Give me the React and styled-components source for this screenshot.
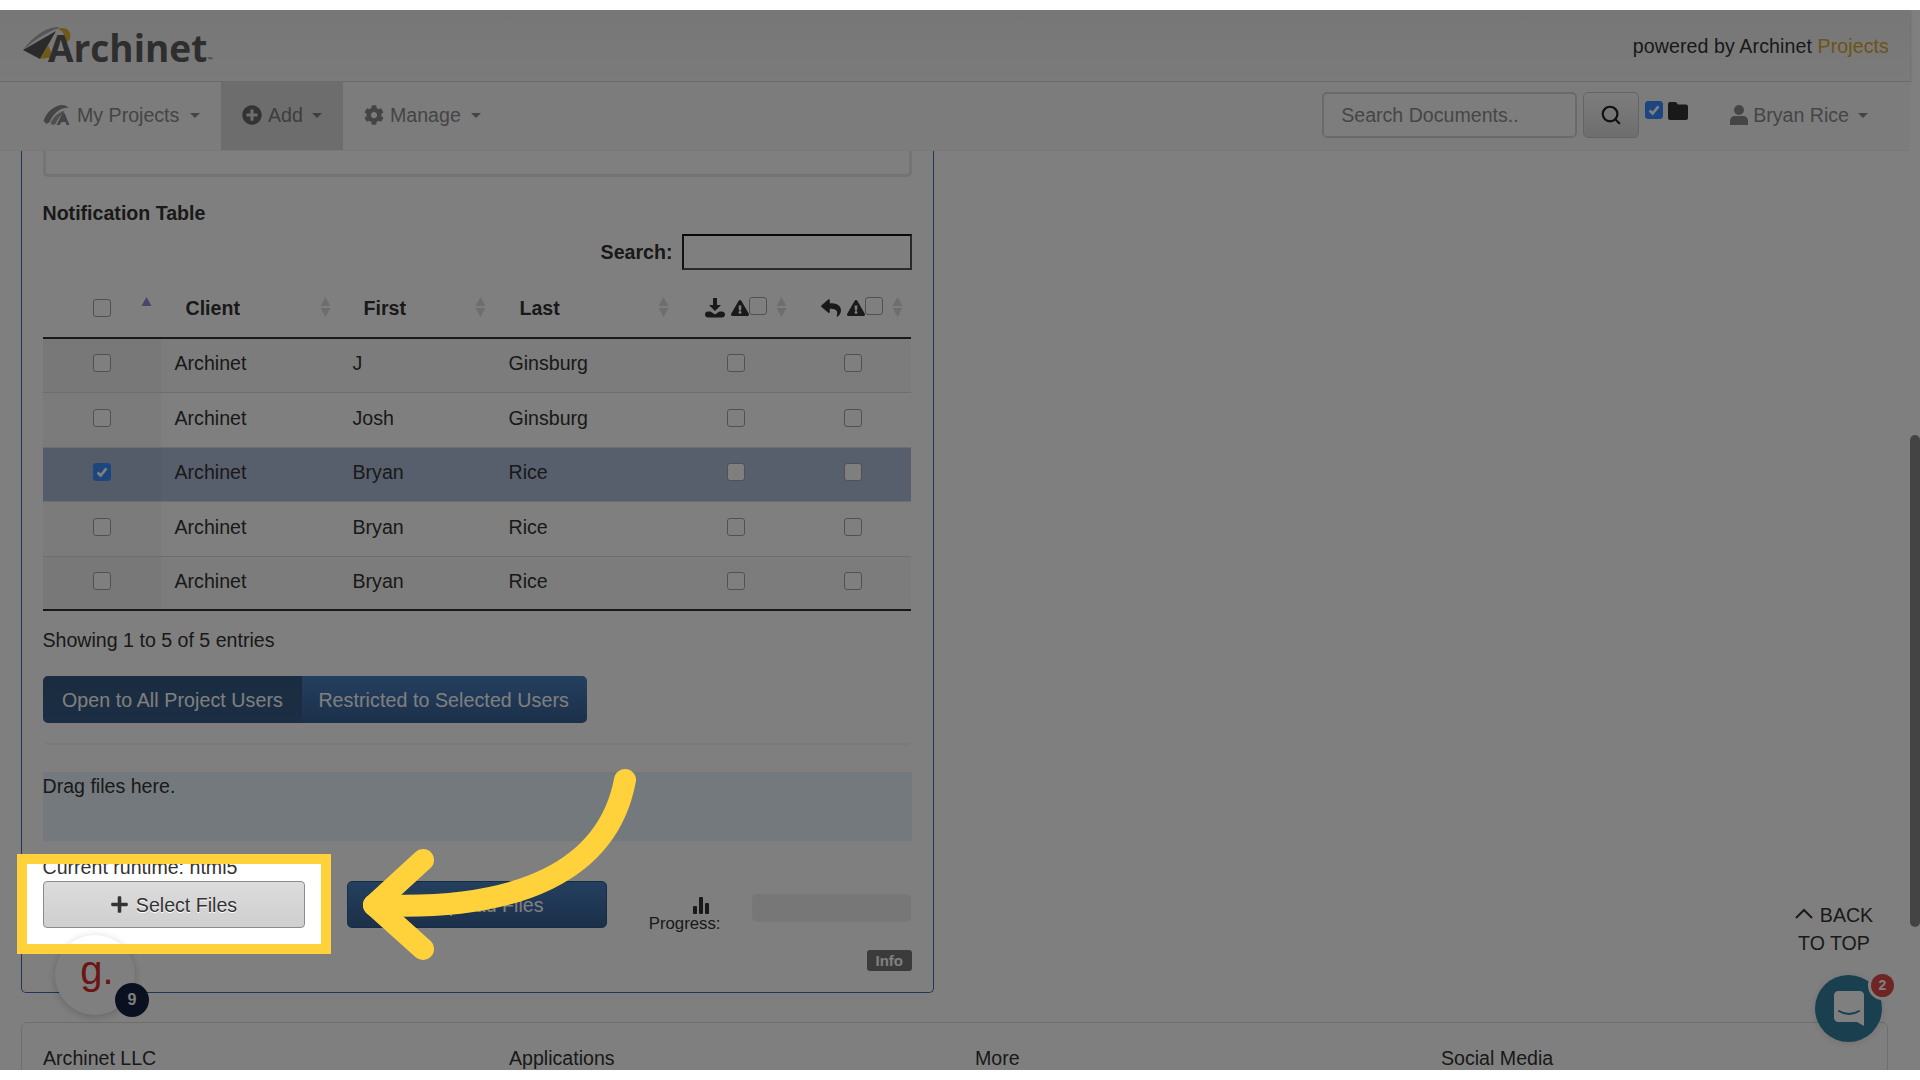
import React from "react";
import styled, { createGlobalStyle } from "styled-components";
import { FaCog, FaExclamationTriangle, FaPlus, FaPlusCircle, FaReply, FaUpload } from "react-icons/fa";
import { Search } from "lucide-react";

const GlobalStyle = createGlobalStyle`
  html, body {
    margin: 0;
    background: #fff;
    overflow: hidden;
  }
  body {
    font-family: "Liberation Sans", Arial, sans-serif;
    font-size: 19.6px;
    line-height: 28px;
    color: #333;
  }
  * { box-sizing: border-box; }
`;

const rows = [
  { first: "J", last: "Ginsburg", striped: true },
  { first: "Josh", last: "Ginsburg" },
  { first: "Bryan", last: "Rice", selected: true },
  { first: "Bryan", last: "Rice" },
  { first: "Bryan", last: "Rice", striped: true },
];

const colWidths = [118, 178, 156, 184, 114, 118];

const Frame = styled.div`
  position: relative;
  display: flex;
  margin-top: 10px;
  height: 1060px;
  overflow: hidden;
`;

const Page = styled.div`
  flex: 1;
  min-width: 0;
`;

const ScrollTrack = styled.div`
  width: 10px;
  padding-top: 425px;
`;

const ScrollThumb = styled.div`
  height: 492px;
  border-radius: 5px;
  background: #888;
`;

const Header = styled.header`
  display: flex;
  align-items: center;
  justify-content: space-between;
  height: 72px;
  padding: 0 21px 0 48px;
  background: linear-gradient(#eeeeee, #f6f6f6);
  border-bottom: 1px solid #d4d4d4;
  box-shadow: 0 1px 3px rgba(0, 0, 0, 0.25);
`;

const Logo = styled.div`
  position: relative;
  margin-top: 16px;
  font-family: "Open Sans", sans-serif;
  font-size: 37px;
  font-weight: 700;
  line-height: 40px;
  color: #5c5c5c;
`;

const LogoMark = styled.svg`
  position: absolute;
  left: -28px;
  top: -5px;
  width: 60px;
  height: 40px;
`;

const LogoText = styled.span`
  position: relative;
`;

const Trademark = styled.span`
  font-size: 7px;
  font-weight: 400;
`;

const Powered = styled.div`
  letter-spacing: 0.09px;
`;

const Gold = styled.span`
  color: #d9a928;
`;

const Nav = styled.nav`
  display: flex;
  align-items: stretch;
  height: 69px;
  padding: 0 40px 0 22px;
  background: #f9f9f9;
  border-bottom: 1px solid #f0f0f0;
  color: #8a8a8a;
`;

const NavItem = styled.div`
  display: flex;
  align-items: center;
  gap: 6px;
  width: ${(p) => p.$width}px;
  padding: 0 21px 2px;
  color: ${(p) => (p.$active ? "#7c7c7c" : "#8a8a8a")};
  background: ${(p) => (p.$active ? "#dadada" : "transparent")};
  svg {
    flex: none;
    color: ${(p) => (p.$active ? "#666" : "#8a8a8a")};
  }
`;

const Caret = styled.span`
  width: 0;
  height: 0;
  margin-left: auto;
  border-top: 5px solid currentColor;
  border-left: 5px solid transparent;
  border-right: 5px solid transparent;
`;

const NavRight = styled.div`
  display: flex;
  align-items: center;
  margin-left: auto;
  padding-bottom: 2px;
`;

const DocSearch = styled.input`
  width: 255px;
  height: 46px;
  padding: 0 17px;
  font: inherit;
  background: #fbfbfb;
  border: 2px solid #d4d4d4;
  border-radius: 5px;
  &::placeholder { color: #8c8c8c; opacity: 1; }
`;

const SearchButton = styled.button`
  display: flex;
  align-items: center;
  justify-content: center;
  width: 56px;
  height: 46px;
  margin-left: 6px;
  padding: 0;
  color: #222;
  background: linear-gradient(#fafafa, #dcdcdc);
  border: 1px solid #c8c8c8;
  border-radius: 5px;
`;

const Check = styled.input.attrs({ type: "checkbox" })`
  appearance: none;
  display: block;
  width: 18px;
  height: 18px;
  margin: 0;
  background: #fff;
  border: 1.5px solid #a2a2a2;
  border-radius: 3px;
  &:checked {
    border-color: #3b8cff;
    background: #3b8cff url("data:image/svg+xml,%3Csvg xmlns='http://www.w3.org/2000/svg' viewBox='0 0 18 18'%3E%3Cpath d='M4 9.500l3.500 3.500L14 5' fill='none' stroke='white' stroke-width='3'/%3E%3C/svg%3E") center / contain no-repeat;
  }
`;

const NavCheck = styled(Check)`
  margin: -10px 0 0 6px;
`;

const FolderIcon = styled.svg`
  width: 20px;
  height: 18px;
  margin: -8px 0 0 5px;
  color: #333;
`;

const UserMenu = styled.div`
  display: flex;
  align-items: center;
  gap: 5px;
  margin-left: 42px;
`;

const UserCaret = styled(Caret)`
  margin: 0 2px 0 4px;
`;

const Content = styled.main`
  padding-left: 21px;
`;

const Panel = styled.section`
  width: 913px;
  padding: 0 21.5px 21px 20.5px;
  background: #fff;
  border: 1px solid #3e6ea8;
  border-top: 0;
  border-radius: 0 0 5px 5px;
`;

const WellStub = styled.div`
  height: 26px;
  border: 3px solid #e8e8e8;
  border-top: 0;
  border-radius: 0 0 5px 5px;
  background: #fff;
`;

const Heading = styled.h4`
  margin: 22px 0 0;
  font-size: 19.6px;
  line-height: 28px;
`;

const SearchRow = styled.label`
  display: flex;
  align-items: center;
  justify-content: flex-end;
  gap: 9px;
  margin-top: 7px;
  font-weight: 700;
`;

const TableSearch = styled.input`
  width: 230px;
  height: 36px;
  background: #fff;
  border: 2px solid #555;
  border-top-color: #111;
  border-left-color: #222;
`;

const Table = styled.table`
  width: 868px;
  margin-top: 10px;
  table-layout: fixed;
  border-collapse: collapse;
`;

const Th = styled.th`
  position: relative;
  height: 58px;
  padding: 0 0 2px ${(p) => p.$pad || 0}px;
  text-align: left;
  font-weight: 700;
  border-bottom: 2px solid #333;
`;

const HeadIcons = styled.div`
  display: flex;
  align-items: center;
  height: 22px;
  svg { flex: none; }
`;

const Warning = styled(FaExclamationTriangle)`
  margin-left: 6px;
  color: #333;
`;

const RaisedCheck = styled(Check)`
  margin: -4px 0 0 0;
`;

const Sort = styled.svg`
  position: absolute;
  top: 17px;
  right: ${(p) => p.$right || 8}px;
  width: 11px;
  height: 20px;
`;

const Tr = styled.tr`
  background: ${(p) => (p.$selected ? "#b0bed9" : p.$striped ? "#f9f9f9" : "#fff")};
  border-top: 1px solid #ddd;
  &:first-child { border-top: 0; }
  &:last-child { border-bottom: 2px solid #333; }
  &:nth-child(even) td { height: 55px; }
`;

const Td = styled.td`
  height: 54px;
  padding: 0 0 4px ${(p) => p.$pad || 0}px;
`;

const SortedTd = styled(Td)`
  background: rgba(0, 0, 0, 0.03);
`;

const CenterCheck = styled(Check)`
  margin: 0 auto;
`;

const Showing = styled.div`
  margin-top: 15px;
`;

const AccessWell = styled.div`
  height: 69px;
  margin-top: 22px;
  border-bottom: 2px solid #f4f4f4;
  border-radius: 0 0 6px 6px;
`;

const AccessGroup = styled.div`
  display: inline-flex;
  height: 47px;
  border-radius: 5px;
  overflow: hidden;
`;

const AccessButton = styled.button`
  padding: ${(p) => (p.$on ? "0 19.5px" : "0 18px 0 16px")};
  font: inherit;
  letter-spacing: 0.08px;
  color: #fff;
  border: 0;
  background: ${(p) => (p.$on ? "linear-gradient(#34597f, #375c88)" : "linear-gradient(#4880be, #376094)")};
`;

const DropZone = styled.div`
  height: 69px;
  margin-top: 27px;
  background: #e8f2fa;
`;

const Runtime = styled.div`
  height: 28px;
  margin-top: 12px;
`;

const UploadRow = styled.div`
  display: flex;
  align-items: flex-start;
  height: 47px;
`;

const FileButton = styled.button`
  display: flex;
  align-items: center;
  justify-content: center;
  gap: 7px;
  height: 47px;
  padding: 0;
  font: inherit;
  cursor: pointer;
`;

const SelectButton = styled(FileButton)`
  width: 262px;
  color: #333;
  background: linear-gradient(#dcdcdc, #cfcfcf);
  border: 1.5px solid #8c8c8c;
  border-radius: 4px;
  text-shadow: 0 1px 0 #fff;
`;

const UploadButton = styled(FileButton)`
  width: 260px;
  margin-left: 42px;
  color: #fff;
  background: linear-gradient(#4880be, #376094);
  border: 1px solid #2e5a8c;
  border-radius: 5px;
`;

const ProgressLabel = styled.div`
  display: flex;
  flex-direction: column;
  align-items: flex-end;
  width: 72px;
  margin: 15px 0 0 42px;
  line-height: 20px;
  font-size: 16.8px;
`;

const StatsIcon = styled.svg`
  width: 18px;
  height: 18px;
  margin-right: 11px;
`;

const ProgressBar = styled.div`
  width: 159px;
  height: 28px;
  margin: 13px 0 0 31px;
  background: #eeeeee;
  border-radius: 5px;
`;

const InfoRow = styled.div`
  display: flex;
  justify-content: flex-end;
  margin-top: 22px;
`;

const InfoBadge = styled.span`
  padding: 0 8.500px;
  font-size: 15px;
  font-weight: 700;
  line-height: 21px;
  color: #fff;
  background: #777;
  border-radius: 3px;
`;

const Footer = styled.footer`
  display: grid;
  grid-template-columns: repeat(4, 466px);
  width: 1867px;
  margin-top: 29px;
  padding: 21px 0 0 21px;
  background: #fff;
  border: 1px solid #ddd;
  border-radius: 6px 6px 0 0;
`;

const GradeWidget = styled.div`
  position: absolute;
  left: 55px;
  top: 925px;
  display: flex;
  align-items: center;
  justify-content: center;
  width: 80px;
  height: 80px;
  padding: 0 0 10px 4px;
  font-size: 40px;
  line-height: 40px;
  color: #d62b2b;
  background: #fff;
  border-radius: 50%;
  box-shadow: 0 2px 8px rgba(0, 0, 0, 0.2);
`;

const GradeCount = styled.span`
  position: absolute;
  left: 60px;
  top: 48px;
  width: 34px;
  height: 34px;
  font-size: 16px;
  font-weight: 700;
  line-height: 34px;
  text-align: center;
  color: #fff;
  background: #142040;
  border-radius: 50%;
`;

const BackToTop = styled.div`
  position: absolute;
  left: 1794px;
  top: 891px;
  width: 80px;
  text-align: center;
  color: #333;
`;

const Chevron = styled.svg`
  width: 18px;
  height: 11px;
  margin-right: 7px;
  vertical-align: 3px;
`;

const ChatButton = styled.div`
  position: absolute;
  left: 1815px;
  top: 965px;
  display: flex;
  align-items: center;
  justify-content: center;
  width: 67px;
  height: 67px;
  background: #347e9e;
  border-radius: 50%;
  box-shadow: 0 1px 8px rgba(0, 0, 0, 0.12);
`;

const ChatBadge = styled.span`
  position: absolute;
  left: 1871px;
  top: 964px;
  width: 23px;
  height: 23px;
  font-size: 14px;
  font-weight: 700;
  line-height: 23px;
  text-align: center;
  color: #fff;
  background: #e04a4a;
  border-radius: 50%;
  box-shadow: 0 0 0 3px #fff;
`;

const Spotlight = styled.div`
  position: absolute;
  left: 17px;
  top: 844px;
  width: 314px;
  height: 100px;
  border: 10px solid #ffd23c;
  box-shadow: 0 0 0 3000px rgba(0, 0, 0, 0.5);
`;

const CurvedArrow = styled.svg`
  position: absolute;
  left: 340px;
  top: 750px;
  width: 300px;
  height: 220px;
`;

const SortArrows = ({ right, asc }) => (
  <Sort viewBox="0 0 10 20" $right={right}>
    <path d="M5 0l5 9H0z" fill={asc ? "#8c8ce0" : "#dcdcdc"} />
    {!asc && <path d="M5 20l5-9H0z" fill="#dcdcdc" />}
  </Sort>
);

const SaveIcon = () => (
  <svg width="20" height="20" viewBox="0 0 20 20" fill="#333">
    <path d="M8 0h4v7h4l-6 6-6-6h4z" />
    <path d="M3 13.500h2.500l4.500 3 4.500-3H17c1.700 0 3 1.300 3 3s-1.300 3-3 3H3c-1.700 0-3-1.300-3-3s1.300-3 3-3z" />
  </svg>
);

const ProjectsIcon = () => (
  <svg width="28" height="21" viewBox="0 0 27 21" fill="#8a8a8a">
    <path d="M0 16C3 7 10 1 18 0c3 0 6 1 7 3-7-1-14 4-19 14l-3 2z" />
    <path d="M7 18c3-6 7-10 13-12l1 1c-4 3-7 7-9 12l-3 1z" opacity=".8" />
    <path d="M19 8l2 0 5 12h-3l-1-3h-4l-2 3h-3z" />
  </svg>
);

const App = () => (
  <>
    <GlobalStyle />
    <Frame>
      <Page>
        <Header>
          <Logo>
            <LogoMark viewBox="0 0 60 40">
              <path d="M3 27C12 15 24 5 37 4l3 1C28 8 16 16 3 27z" fill="#aaa" />
              <path d="M3 27L36 8 20 36z" fill="#555" />
              <path d="M38 6c8-3 14 2 12 10l-6 6c2-8 0-14-6-16z" fill="#e0b030" />
              <path d="M20 36l8-14 5 12z" fill="#e0b030" />
            </LogoMark>
            <LogoText>Archinet<Trademark>™</Trademark></LogoText>
          </Logo>
          <Powered>powered by Archinet <Gold>Projects</Gold></Powered>
        </Header>
        <Nav>
          <NavItem $width={199}><ProjectsIcon />My Projects<Caret /></NavItem>
          <NavItem $width={122} $active><FaPlusCircle size={20} />Add<Caret /></NavItem>
          <NavItem $width={159}><FaCog size={20} />Manage<Caret /></NavItem>
          <NavRight>
            <DocSearch placeholder="Search Documents.." />
            <SearchButton><Search size={22} strokeWidth={2.4} /></SearchButton>
            <NavCheck defaultChecked />
            <FolderIcon viewBox="0 0 20 18" fill="currentColor">
              <path d="M2 0h5c1 0 2 .8 3 2.500h8c1.100 0 2 .9 2 2V16c0 1.100-.9 2-2 2H2c-1.100 0-2-.9-2-2V2C0 .9.900 0 2 0z" />
            </FolderIcon>
            <UserMenu>
              <svg width="18" height="20" viewBox="0 0 18 20" fill="#8a8a8a">
                <circle cx="9" cy="5" r="5" />
                <path d="M5 11h8c3 0 5 2 5 5v4H0v-4c0-3 2-5 5-5z" />
              </svg>
              Bryan Rice<UserCaret />
            </UserMenu>
          </NavRight>
        </Nav>
        <Content>
          <Panel>
            <WellStub />
            <Heading>Notification Table</Heading>
            <SearchRow>Search:<TableSearch /></SearchRow>
            <Table>
              <colgroup>
                {colWidths.map((w, i) => <col key={i} width={w} />)}
              </colgroup>
              <thead>
                <tr>
                  <Th><CenterCheck /><SortArrows asc right={9} /></Th>
                  <Th $pad={25}>Client<SortArrows /></Th>
                  <Th $pad={25}>First<SortArrows right={9} /></Th>
                  <Th $pad={25}>Last<SortArrows right={10} /></Th>
                  <Th $pad={26}>
                    <HeadIcons>
                      <SaveIcon />
                      <Warning size={18} />
                      <RaisedCheck />
                    </HeadIcons>
                    <SortArrows right={6} />
                  </Th>
                  <Th $pad={28}>
                    <HeadIcons>
                      <FaReply size={20} color="#333" />
                      <Warning size={18} />
                      <RaisedCheck />
                    </HeadIcons>
                    <SortArrows />
                  </Th>
                </tr>
              </thead>
              <tbody>
                {rows.map((r, i) => (
                  <Tr key={i} $selected={r.selected} $striped={r.striped}>
                    <SortedTd><CenterCheck defaultChecked={r.selected} /></SortedTd>
                    <Td $pad={14}>Archinet</Td>
                    <Td $pad={14}>{r.first}</Td>
                    <Td $pad={14}>{r.last}</Td>
                    <Td><CenterCheck /></Td>
                    <Td $pad={2}><CenterCheck /></Td>
                  </Tr>
                ))}
              </tbody>
            </Table>
            <Showing>Showing 1 to 5 of 5 entries</Showing>
            <AccessWell>
              <AccessGroup>
                <AccessButton $on>Open to All Project Users</AccessButton>
                <AccessButton>Restricted to Selected Users</AccessButton>
              </AccessGroup>
            </AccessWell>
            <DropZone>Drag files here.</DropZone>
            <Runtime>Current runtime: html5</Runtime>
            <UploadRow>
              <SelectButton><FaPlus size={19} />Select Files</SelectButton>
              <UploadButton><FaUpload size={18} />Upload Files</UploadButton>
              <ProgressLabel>
                <StatsIcon viewBox="0 0 18 18" fill="#333">
                  <rect x="1" y="10" width="4" height="8" rx="1" />
                  <rect x="7" y="1" width="4" height="17" rx="1" />
                  <rect x="13" y="7" width="4" height="11" rx="1" />
                </StatsIcon>
                Progress:
              </ProgressLabel>
              <ProgressBar />
            </UploadRow>
            <InfoRow><InfoBadge>Info</InfoBadge></InfoRow>
          </Panel>
          <Footer>
            <div>Archinet LLC</div>
            <div>Applications</div>
            <div>More</div>
            <div>Social Media</div>
          </Footer>
        </Content>
      </Page>
      <ScrollTrack><ScrollThumb /></ScrollTrack>

      <GradeWidget>g.<GradeCount>9</GradeCount></GradeWidget>
      <BackToTop>
        <Chevron viewBox="0 0 18 11" fill="none" stroke="#333" strokeWidth="2">
          <path d="M1 10l8-8 8 8" />
        </Chevron>
        BACK TO TOP
      </BackToTop>
      <ChatButton>
        <svg width="30" height="35" viewBox="0 0 30 35" fill="#fff">
          <path d="M4 0h22c2 0 4 2 4 4v31l-7-4H4c-2 0-4-2-4-4V4c0-2 2-4 4-4z" />
          <path d="M5 20c6 4 14 4 20 0" fill="none" stroke="#347e9e" strokeWidth="2" strokeLinecap="round" />
        </svg>
      </ChatButton>
      <ChatBadge>2</ChatBadge>

      <Spotlight />
      <CurvedArrow viewBox="340 760 300 220" fill="none" stroke="#ffd23c" strokeWidth="22" strokeLinecap="round" strokeLinejoin="round">
        <path d="M625 780C608 870 520 912 374 905" />
        <path d="M423 860L374 905 423 949" />
      </CurvedArrow>
    </Frame>
  </>
);

export default App;
